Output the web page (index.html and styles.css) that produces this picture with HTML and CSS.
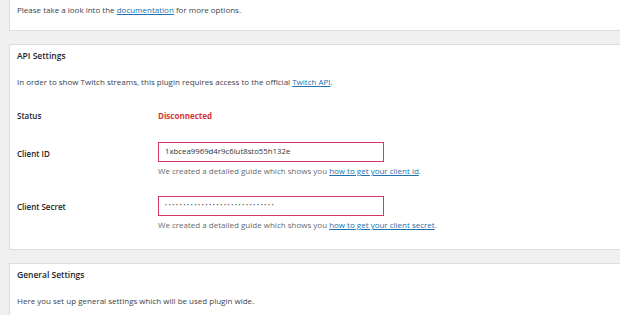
FILE: index.html
```html
<!DOCTYPE html>
<html>
<head>
<meta charset="utf-8">
<link rel="stylesheet" href="styles.css">
</head>
<body>
<div class="wrap">
  <div class="panel panel-top">
    <p class="text">Please take a look into the <a href="#">documentation</a> for more options.</p>
  </div>
  <div class="panel panel-api">
    <h2 class="title">API Settings</h2>
    <p class="text intro">In order to show Twitch streams, this plugin requires access to the official <a href="#">Twitch API</a>.</p>
    <div class="row row-status">
      <div class="label">Status</div>
      <div class="field"><span class="status">Disconnected</span></div>
    </div>
    <div class="row row-id">
      <div class="label">Client ID</div>
      <div class="field">
        <div class="input">1xbcea9969d4r9c6iut8sto55h132e</div>
        <p class="desc">We created a detailed guide which shows you <a href="#">how to get your client id</a>.</p>
      </div>
    </div>
    <div class="row row-secret">
      <div class="label">Client Secret</div>
      <div class="field">
        <div class="input dots">••••••••••••••••••••••••••••••</div>
        <p class="desc">We created a detailed guide which shows you <a href="#">how to get your client secret</a>.</p>
      </div>
    </div>
  </div>
  <div class="panel panel-general">
    <h2 class="title">General Settings</h2>
    <p class="text intro">Here you set up general settings which will be used plugin wide.</p>
  </div>
</div>
</body>
</html>
```
FILE: styles.css
```css
html, body {
  margin: 0;
  padding: 0;
  background: #f0f0f1;
  overflow: hidden;
}
body {
  font-family: "Open Sans", "Noto Sans", sans-serif;
  font-size: 8px;
  line-height: 12px;
  color: #3c434a;
}
.wrap {
  padding-left: 9px;
}
.panel {
  background: #fff;
  border: 1px solid #dcdcde;
  border-right: 0;
  padding: 0 0 0 7px;
  margin-bottom: 13px;
}
.panel-top {
  border-top: 0;
  padding-top: 4px;
  padding-bottom: 14px;
}
.panel-api {
  padding-top: 5px;
  padding-bottom: 18px;
}
.panel-general {
  padding-top: 5px;
  padding-bottom: 20px;
}
p { margin: 0; }
a { color: #2271b1; text-decoration: underline; }
.title {
  margin: 0;
  font-size: 8.5px;
  line-height: 12px;
  font-weight: 600;
  color: #1d2327;
}
.intro { margin-top: 14px; }
.row {
  display: flex;
}
.label {
  width: 141px;
  flex: none;
  font-weight: 600;
  color: #1d2327;
}
.row-status { margin-top: 22px; }
.row-id { margin-top: 20px; }
.row-id .label { padding-top: 6px; }
.row-secret { margin-top: 19px; }
.row-secret .label { padding-top: 5px; }
.status {
  color: #d63638;
  font-weight: 700;
}
.input {
  width: 226px;
  height: 20px;
  box-sizing: border-box;
  border: 1.5px solid #d23a62;
  padding: 0 6px;
  line-height: 17px;
  font-size: 7.8px;
  color: #2c3338;
}
.dots {
  font-size: 5px;
  letter-spacing: 1.8px;
}
.desc {
  margin-top: 3px;
  color: #646970;
}
```
